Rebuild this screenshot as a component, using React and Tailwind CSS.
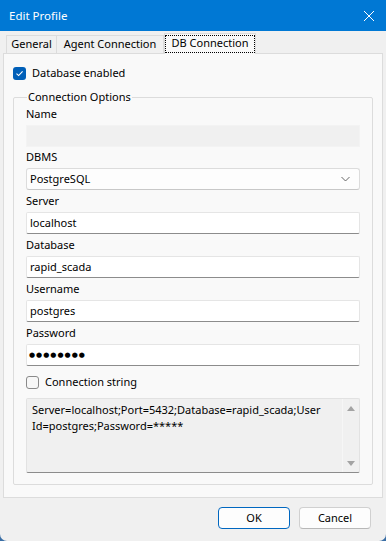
export default function App() {
  const font = { fontFamily: '"Noto Sans", "Open Sans", sans-serif' };
  const fields = [
    { label: "Server", value: "localhost" },
    { label: "Database", value: "rapid_scada" },
    { label: "Username", value: "postgres" },
  ];

  return (
    <div className="w-[386px] h-[541px] bg-[#3a6ea5] text-[11px] text-black" style={font}>
      <div className="w-full h-full bg-[#f0f0f0] rounded-b-[7px] overflow-hidden flex flex-col">
        {/* title bar */}
        <div className="h-[31px] bg-[#0078d4] flex items-center justify-between pl-[9px] pr-[10px] shrink-0">
          <span className="text-white text-[11.5px]">Edit Profile</span>
          <svg width="12" height="12" viewBox="0 0 12 12" className="mr-[1px]">
            <path d="M1 1L11 11M11 1L1 11" stroke="#fff" strokeWidth="1" />
          </svg>
        </div>

        {/* tabs */}
        <div className="px-[3px] pt-[1px] shrink-0">
          <div className="flex items-end h-[21px] pl-[3px]">
            <div className="h-[18px] w-[50px] flex items-center justify-center border-t border-l border-[#dcdcdc] bg-[#f0f0f0]">General</div>
            <div className="h-[18px] w-[108px] flex items-center justify-center border-t border-l border-r border-[#dcdcdc] bg-[#f0f0f0]">Agent Connection</div>
            <div className="h-[21px] w-[92px] -mb-[1px] relative z-10 flex items-center justify-center border-t border-x border-[#dcdcdc] bg-[#f9f9f9]">
              <div className="absolute inset-x-0 top-[1px] bottom-[1px] border border-dotted border-black"></div>
              <span className="-mt-[2px]">DB Connection</span>
            </div>
          </div>
        </div>

        {/* tab page */}
        <div className="mx-[3px] h-[445px] border border-[#dcdcdc] bg-[#f9f9f9] px-[9px] pt-[12px] shrink-0">
          <label className="flex items-center gap-[6px] h-[14px]">
            <span className="w-[13px] h-[13px] rounded-[3px] bg-[#005fb8] flex items-center justify-center">
              <svg width="9" height="9" viewBox="0 0 9 9">
                <path d="M1.5 4.7L3.6 6.6L7.6 2.3" stroke="#fff" strokeWidth="1.1" fill="none" />
              </svg>
            </span>
            <span>Database enabled</span>
          </label>

          {/* group box */}
          <fieldset className="mt-[10px] h-[395px] border border-[#dcdcdc] rounded-[2px] px-[12px] pb-[11px] mx-0 min-w-0">
            <legend className="ml-[1px] px-[1px] leading-[14px]">Connection Options</legend>

            <div className="flex flex-col -mt-[1px]">
              <div className="h-[22px] flex items-center">Name</div>
              <div className="h-[22px] bg-[#f0f0f0] border border-[#f3f3f3]"></div>

              <div className="h-[21px] flex items-center">DBMS</div>
              <div className="h-[22px] bg-[#fdfdfd] border border-[#dcdcdc] border-b-[#c8c8c8] rounded-[3px] flex items-center justify-between pl-[3px] pr-[9px]">
                <span>PostgreSQL</span>
                <svg width="9" height="6" viewBox="0 0 9 6">
                  <path d="M0.5 1L4.5 5L8.5 1" stroke="#555" strokeWidth="0.9" fill="none" />
                </svg>
              </div>

              {fields.map((f) => (
                <div key={f.label} className="flex flex-col">
                  <div className="h-[22px] flex items-center">{f.label}</div>
                  <div className="h-[22px] bg-white border border-[#e5e5e5] border-b-[#8c8c8c] rounded-[2px] flex items-center pl-[3px]">
                    {f.value}
                  </div>
                </div>
              ))}

              <div className="h-[22px] flex items-center">Password</div>
              <div className="h-[22px] bg-white border border-[#e5e5e5] border-b-[#8c8c8c] rounded-[2px] flex items-center pl-[2px]">
                <span className="text-[7px] tracking-[1px]" style={{ fontFamily: '"DejaVu Sans", sans-serif' }}>●●●●●●●●</span>
              </div>

              <label className="mt-[9px] h-[14px] flex items-center gap-[6px]">
                <span className="w-[13px] h-[13px] rounded-[3px] border border-[#8a8a8a] bg-[#f7f7f7]"></span>
                <span>Connection string</span>
              </label>

              <div className="mt-[9px] h-[75px] bg-[#f0f0f0] border border-[#e2e2e2] border-b-[#8c8c8c] rounded-[2px] flex">
                <div className="flex-1 pl-[5px] pt-[3px] leading-[16px]">
                  <div>Server=localhost;Port=5432;Database=rapid_scada;User</div>
                  <div>Id=postgres;Password=*****</div>
                </div>
                <div className="w-[17px] border-l border-[#f6f6f6] flex flex-col items-center justify-between pt-[7px] pb-[6px]">
                  <svg width="8" height="5" viewBox="0 0 8 5"><path d="M0 5L4 0L8 5Z" fill="#a3a3a3" /></svg>
                  <svg width="8" height="5" viewBox="0 0 8 5"><path d="M0 0L4 5L8 0Z" fill="#a3a3a3" /></svg>
                </div>
              </div>
            </div>
          </fieldset>
        </div>

        {/* buttons */}
        <div className="flex justify-end gap-[9px] pr-[15px] pt-[9px]">
          <button className="w-[72px] h-[22px] bg-[#fdfdfd] border border-[#0067c0] rounded-[4px] text-[11px]">OK</button>
          <button className="w-[72px] h-[22px] bg-[#fdfdfd] border border-[#d0d0d0] border-b-[#b8b8b8] rounded-[4px] text-[11px]">Cancel</button>
        </div>
      </div>
    </div>
  );
}
